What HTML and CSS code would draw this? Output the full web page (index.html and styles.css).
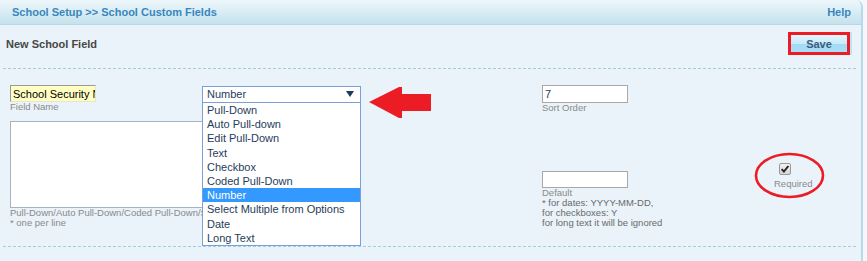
FILE: index.html
```html
<!DOCTYPE html>
<html>
<head>
<meta charset="utf-8">
<link rel="stylesheet" href="styles.css">
</head>
<body>
<div class="page">
  <div class="header">
    <span class="crumb">School Setup &gt;&gt; School Custom Fields</span>
    <span class="help">Help</span>
  </div>
  <div class="titlebar">
    <span class="title">New School Field</span>
    <span class="mark-box"><button class="save">Save</button></span>
  </div>
  <div class="form">
    <div class="col c1">
      <input class="field yellow" type="text" value="School Security Number">
      <div class="lbl">Field Name</div>
      <textarea class="options"></textarea>
      <div class="lbl clip">Pull-Down/Auto Pull-Down/Coded Pull-Down/Select Multiple from Options values</div>
      <div class="lbl">* one per line</div>
    </div>
    <div class="col c2">
      <div class="select-wrap">
        <div class="select">Number
          <svg class="caret" width="8" height="6" viewBox="0 0 8 6"><polygon points="0,0 8,0 4,6" fill="#1c3c58"/></svg>
        </div>
        <div class="list">
          <div class="opt">Pull-Down</div>
          <div class="opt">Auto Pull-down</div>
          <div class="opt">Edit Pull-Down</div>
          <div class="opt">Text</div>
          <div class="opt">Checkbox</div>
          <div class="opt">Coded Pull-Down</div>
          <div class="opt sel">Number</div>
          <div class="opt">Select Multiple from Options</div>
          <div class="opt">Date</div>
          <div class="opt">Long Text</div>
        </div>
      </div>
    </div>
    <div class="col c3">
      <input class="field plain" type="text" value="7">
      <div class="lbl">Sort Order</div>
      <input class="field plain default" type="text" value="">
      <div class="lbl">Default</div>
      <div class="note">* for dates: YYYY-MM-DD,</div>
      <div class="note">for checkboxes: Y</div>
      <div class="note">for long text it will be ignored</div>
    </div>
    <div class="col c4">
      <div class="req">
        <svg class="check" width="12" height="12" viewBox="0 0 12 12">
          <defs><linearGradient id="cb" x1="0" y1="0" x2="0" y2="1"><stop offset="0" stop-color="#f4f4f4"/><stop offset="1" stop-color="#d2d2d2"/></linearGradient></defs>
          <rect x="0.5" y="0.5" width="11" height="11" rx="1.5" fill="url(#cb)" stroke="#9a9a9a"/>
          <path d="M2.6 6.2 L4.9 8.6 L9.4 3" fill="none" stroke="#222" stroke-width="1.9"/>
        </svg>
        <div class="lbl">Required</div>
      </div>
    </div>
    <svg class="arrow" width="64" height="33" viewBox="0 0 64 33"><polygon points="1,16 31,1 34,1 34,8 63,8 63,25 34,25 34,32 31,32" fill="#ec1c24"/></svg>
    <svg class="ellipse" width="71" height="47" viewBox="0 0 71 47"><ellipse cx="35.5" cy="23.5" rx="33.5" ry="21.5" fill="none" stroke="#ec1c24" stroke-width="2.6"/></svg>
  </div>
</div>
</body>
</html>
```
FILE: styles.css
```css
body {
  margin: 0;
  background: #f2f8fb;
  font-family: "Liberation Sans", Arial, sans-serif;
}

.page {
  width: 861px;
  height: 261px;
  background: #eaf3f9;
  border-right: 2px solid #b8d9e9;
  border-top-right-radius: 7px;
  overflow: hidden;
}

.header {
  height: 25px;
  box-sizing: border-box;
  border-bottom: 1px solid #b6d8e7;
  background: linear-gradient(#eef7fb, #c4e2ee);
  display: flex;
  align-items: center;
  justify-content: space-between;
  padding: 0 10px 1px 12px;
  font-size: 11px;
  font-weight: bold;
  color: #3a86bc;
}

.titlebar {
  height: 43px;
  display: flex;
  justify-content: space-between;
  align-items: flex-start;
  padding: 0 11px 0 6px;
}

.title {
  margin-top: 13px;
  font-size: 11px;
  line-height: 13px;
  font-weight: bold;
  color: #474747;
}

.mark-box {
  margin-top: 7px;
  width: 62px;
  height: 23px;
  box-sizing: border-box;
  border: 3px solid #ec1c24;
  display: flex;
  box-shadow: 2px 0 0 0 #bfe3f5;
}

.save {
  flex: 1;
  margin: 0;
  padding: 0;
  border: none;
  background: linear-gradient(#e3f5fd 0%, #c9ebfb 50%, #a2daf7 50%, #a9def8 100%);
  font-family: "Liberation Sans", Arial, sans-serif;
  font-size: 11px;
  font-weight: bold;
  color: #3b5d7c;
}

.form {
  position: relative;
  margin: 0 5px 0 3px;
  border-top: 1px dashed #a3cde0;
  border-bottom: 1px dashed #a3cde0;
  height: 161px;
  padding: 16px 0 0 7px;
  display: grid;
  grid-template-columns: 192px 340px 232px auto;
  align-items: start;
}

.col {
  display: flex;
  flex-direction: column;
  align-items: flex-start;
}

.field {
  display: block;
  width: 86px;
  height: 17px;
  box-sizing: border-box;
  margin: 0;
  padding: 0 0 0 2px;
  font-family: "Liberation Sans", Arial, sans-serif;
  font-size: 11px;
  outline: none;
}

.yellow {
  background: #ffffc4;
  border: 1px solid;
  border-color: #9a9a9a #e6e6c8 #e6e6c8 #9a9a9a;
  color: #000;
}

.plain {
  height: 18px;
  background: #fff;
  border: 1px solid #a8a8a8;
  color: #1f3d5a;
}

.default {
  margin-top: 58px;
  height: 17px;
}

.lbl {
  font-size: 9.5px;
  line-height: 10px;
  color: #8a8a8a;
}

.clip {
  width: 192px;
  white-space: nowrap;
  overflow: hidden;
}

.note {
  font-size: 9.5px;
  line-height: 10px;
  color: #6a6a6a;
  white-space: nowrap;
}

.options {
  display: block;
  width: 300px;
  height: 87px;
  box-sizing: border-box;
  margin: 9px 0 0 0;
  padding: 0;
  border: 1px solid #a6b4c2;
  background: #fff;
  resize: none;
}

.select-wrap {
  position: relative;
  width: 159px;
  margin-top: 1px;
}

.select {
  position: relative;
  height: 17px;
  box-sizing: border-box;
  border: 1px solid #7c9fd6;
  background: #fff;
  font-size: 11px;
  line-height: 15px;
  padding-left: 4px;
  color: #1f3d5a;
}

.caret {
  position: absolute;
  right: 6px;
  top: 4px;
}

.list {
  position: absolute;
  left: 0;
  top: 16px;
  width: 159px;
  box-sizing: border-box;
  border: 1px solid #7c9fd6;
  background: #fff;
  z-index: 2;
}

.opt {
  height: 14.2px;
  line-height: 14.2px;
  padding-left: 4px;
  font-size: 11px;
  color: #1f3d5a;
  white-space: nowrap;
}

.opt.sel {
  background: #3399ff;
  color: #fff;
}

.c4 {
  padding-top: 78px;
}

.req {
  display: flex;
  flex-direction: column;
  align-items: flex-start;
}

.check {
  display: block;
  margin-left: 5px;
  margin-bottom: 4px;
}

.arrow {
  position: absolute;
  left: 365px;
  top: 17px;
}

.ellipse {
  position: absolute;
  left: 751px;
  top: 83px;
}
```
